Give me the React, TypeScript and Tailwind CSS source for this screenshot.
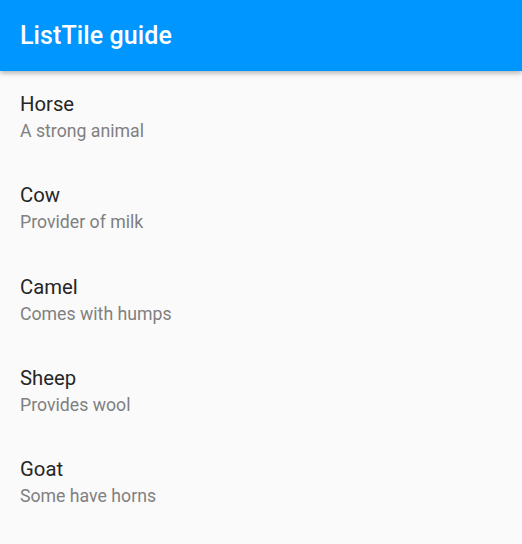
const items = [
  { title: 'Horse', subtitle: 'A strong animal' },
  { title: 'Cow', subtitle: 'Provider of milk' },
  { title: 'Camel', subtitle: 'Comes with humps' },
  { title: 'Sheep', subtitle: 'Provides wool' },
  { title: 'Goat', subtitle: 'Some have horns' },
];

export default function App() {
  return (
    <div className="w-[522px] h-[544px] overflow-hidden bg-[#fafafa] font-['Roboto',sans-serif]">
      <header className="relative z-10 h-[71px] flex items-center px-5 bg-[#0096ff] shadow-[0_2px_5px_rgba(0,0,0,0.3)]">
        <h1 className="text-white text-[25px] font-medium tracking-[0.1px]">ListTile guide</h1>
      </header>
      <ul>
        {items.map(item => (
          <li key={item.title} className="h-[91.3px] flex flex-col justify-center px-5 pt-[2px]">
            <div className="text-[20.3px] leading-[26px] text-[#262626]">{item.title}</div>
            <div className="text-[17.7px] leading-[26px] pt-[1px] text-[#808080]">{item.subtitle}</div>
          </li>
        ))}
      </ul>
    </div>
  );
}
